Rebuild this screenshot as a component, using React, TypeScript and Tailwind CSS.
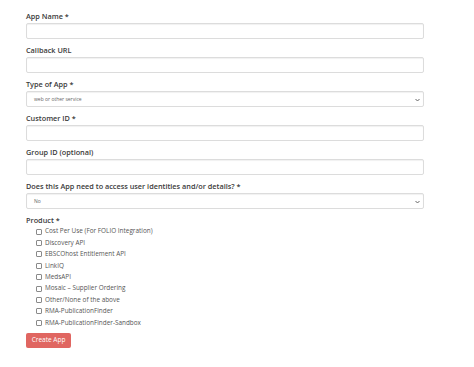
import React from "react";

const Chevron = () => (
  <svg width="5" height="4" viewBox="0 0 10 8" className="absolute right-[3px] top-[6px]">
    <path d="M1 2 L5 6 L9 2" fill="none" stroke="#666" strokeWidth="2" />
  </svg>
);

function Field({ label, children }: { label: string; children: React.ReactNode }) {
  return (
    <div className="mb-[6px]">
      <div className="h-[10px] leading-[10px] text-[7.3px] font-semibold text-[#3a3a3a] mb-[2px] whitespace-nowrap">{label}</div>
      {children}
    </div>
  );
}

const Input = () => (
  <div className="h-[16px] w-full rounded-[2px] border border-[#dcdcdc] bg-white shadow-[inset_0_1px_1px_rgba(0,0,0,0.06)]" />
);

const Select = ({ value }: { value: string }) => (
  <div className="relative h-[16px] w-full rounded-[2px] border border-[#dcdcdc] bg-white shadow-[inset_0_1px_1px_rgba(0,0,0,0.06)] flex items-center pl-[7px]">
    <span className="text-[5px] text-[#666] leading-none">{value}</span>
    <Chevron />
  </div>
);

const products = [
  "Cost Per Use (For FOLIO Integration)",
  "Discovery API",
  "EBSCOhost Entitlement API",
  "LinkIQ",
  "MedsAPI",
  "Mosaic \u2013 Supplier Ordering",
  "Other/None of the above",
  "RMA-PublicationFinder",
  "RMA-PublicationFinder-Sandbox",
];

export default function App() {
  return (
    <div className="w-[474px] h-[367px] bg-white" style={{ fontFamily: '"Open Sans", sans-serif' }}>
      <div className="ml-[26px] w-[398px] pt-[11px]">
        <Field label="App Name *"><Input /></Field>
        <Field label="Callback URL"><Input /></Field>
        <Field label="Type of App *"><Select value="web or other service" /></Field>
        <Field label="Customer ID *"><Input /></Field>
        <Field label="Group ID (optional)"><Input /></Field>
        <Field label="Does this App need to access user identities and/or details? *"><Select value="No" /></Field>
        <div className="h-[10px] leading-[10px] text-[7.3px] font-semibold text-[#3a3a3a]">Product *</div>
        <div className="pl-[10px] mt-[1px]">
          {products.map((p) => (
            <div key={p} className="flex items-center h-[11.4px] gap-[3px]">
              <span className="w-[6px] h-[6px] border border-[#8a8a8a] rounded-[1px] bg-white shrink-0" />
              <span className="text-[6.4px] text-[#555] leading-none whitespace-nowrap">{p}</span>
            </div>
          ))}
        </div>
        <div className="mt-[4px] w-[45px] h-[15px] rounded-[2px] bg-[#e06661] flex items-center justify-center">
          <span className="text-[6.5px] text-white leading-none">Create App</span>
        </div>
      </div>
    </div>
  );
}
